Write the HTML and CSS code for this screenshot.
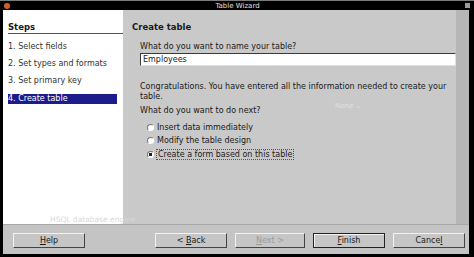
FILE: index.html
```html
<!DOCTYPE html>
<html lang="en">

<head>
    <meta charset="UTF-8">
    <title>Table Wizard</title>
    <link rel="stylesheet" href="styles.css">
</head>

<body>
    <div class="window">
        <div class="titlebar">
            <span class="app-icon"></span>
            <span class="title">Table Wizard</span>
            <span class="close-btn"></span>
        </div>

        <div class="main">
            <div class="steps">
                <div class="steps-head">Steps</div>
                <div class="step">1. Select fields</div>
                <div class="step">2. Set types and formats</div>
                <div class="step">3. Set primary key</div>
                <div class="step active">4. Create table</div>
                <div class="ghost-engine">HSQL database engine</div>
            </div>

            <div class="page">
                <div class="page-title">Create table</div>
                <div class="form">
                    <label for="table-name">What do you want to name your table?</label>
                    <input id="table-name" class="name-input" type="text" value="Employees">

                    <p class="congrats">Congratulations. You have entered all the information needed to create your table.</p>
                    <span class="ghost-none">None &#8964;</span>
                    <p class="question">What do you want to do next?</p>

                    <div class="options">
                        <label class="option"><span class="radio"></span>Insert data immediately</label>
                        <label class="option"><span class="radio"></span>Modify the table design</label>
                        <label class="option"><span class="radio checked"></span><span class="focus">Create a form based on this table</span></label>
                    </div>
                </div>
            </div>
            <div class="ghost-band"></div>
        </div>

        <div class="buttons">
            <button class="btn"><u>H</u>elp</button>
            <div class="spacer"></div>
            <button class="btn">&lt; <u>B</u>ack</button>
            <button class="btn disabled"><u>N</u>ext &gt;</button>
            <button class="btn btn-finish"><u>F</u>inish</button>
            <button class="btn">Cance<u>l</u></button>
        </div>
    </div>
</body>

</html>
```

FILE: styles.css
```css
body {
    margin: 0;
    background: #000;
    font-family: "DejaVu Sans", sans-serif;
    font-size: 8px;
    color: #1a1a1a;
}

.window {
    width: 474px;
    height: 257px;
    display: flex;
    flex-direction: column;
    background: #000;
}

.titlebar {
    height: 10px;
    display: flex;
    align-items: center;
    border-top: 1px solid #7a7a7a;
    box-sizing: border-box;
    padding: 0 4px;
    background: #000;
}

.app-icon {
    width: 6px;
    height: 6px;
    border-radius: 50%;
    background: #d0602a;
}

.title {
    flex: 1;
    text-align: center;
    color: #e0e0e0;
    font-size: 7px;
}

.close-btn {
    width: 5px;
    height: 5px;
    background: #9a9a9a;
}

.main {
    flex: 1;
    display: flex;
    margin: 0 5px 0 3px;
    background: #c9c9c9;
    border-bottom: 1px solid #a8a8a8;
}

/* left step list */
.steps {
    width: 120px;
    background: #fff;
    padding: 12px 0 0 5px;
    box-sizing: border-box;
    display: flex;
    flex-direction: column;
}

.steps-head {
    font-weight: bold;
    font-size: 8.5px;
    padding-bottom: 1px;
    border-bottom: 1px solid #555;
    margin-bottom: 8px;
}

.step {
    height: 17px;
    color: #333;
}

.step.active {
    height: 10px;
    line-height: 10px;
    margin-top: 1px;
    margin-right: 6px;
    background: #1c1c8c;
    color: #fff;
}

.ghost-engine {
    margin-top: auto;
    margin-bottom: 0;
    padding-left: 42px;
    white-space: nowrap;
    color: #d8d8d8;
    font-size: 7.5px;
}

/* right page */
.page {
    flex: 1;
    padding: 12px 0 0 9px;
}

.page-title {
    font-weight: bold;
    font-size: 8.5px;
    margin-bottom: 10px;
}

.form {
    position: relative;
    padding-left: 8px;
}

.name-input {
    display: block;
    width: 316px;
    height: 13px;
    box-sizing: border-box;
    margin: 2px 0 0;
    padding: 0 2px;
    border: 1px solid #3a3a3a;
    border-bottom-color: #e0e0e0;
    border-right-color: #e0e0e0;
    background: #fff;
    font-family: inherit;
    font-size: 8px;
    color: #1a1a1a;
}

.congrats {
    margin: 16px 0 0;
    width: 310px;
    line-height: 10px;
}

.ghost-none {
    position: absolute;
    left: 203px;
    top: 61px;
    line-height: 7px;
    color: #e0e0e0;
    font-size: 7px;
}

.question {
    width: fit-content;
    margin: 4px 0 0;
}

.options {
    display: flex;
    flex-direction: column;
    gap: 3.5px;
    margin: 7px 0 0 7px;
}

.option {
    display: flex;
    align-items: center;
    gap: 3px;
    height: 10px;
}

.radio {
    width: 5px;
    height: 5px;
    border-radius: 50%;
    border: 1px solid #777;
    border-right-color: #fff;
    border-bottom-color: #fff;
    background: #fff;
    box-sizing: content-box;
}

.radio.checked {
    background: radial-gradient(circle, #222 45%, #fff 55%);
}

.focus {
    outline: 1px dotted #555;
    padding: 0 1px;
}

.ghost-band {
    width: 82px;
    background: #b6b6b6;
}

/* bottom button row */
.buttons {
    height: 29px;
    display: flex;
    align-items: center;
    gap: 8px;
    margin: 0 5px 3px 3px;
    padding: 1px 4px 0 10px;
    box-sizing: border-box;
    background: #c4c4c4;
}

.spacer {
    flex: 1;
}

.btn {
    width: 72px;
    height: 15px;
    padding: 0;
    background: #c6c6c6;
    border: 1px solid #444;
    border-top-color: #f2f2f2;
    border-left-color: #f2f2f2;
    font-family: inherit;
    font-size: 8px;
    color: #1a1a1a;
}

.btn.disabled {
    color: #9a9a9a;
    width: 70px;
}

.btn-finish {
    border: 1px solid #222;
    box-shadow: inset 1px 1px 0 #f2f2f2;
}
```
